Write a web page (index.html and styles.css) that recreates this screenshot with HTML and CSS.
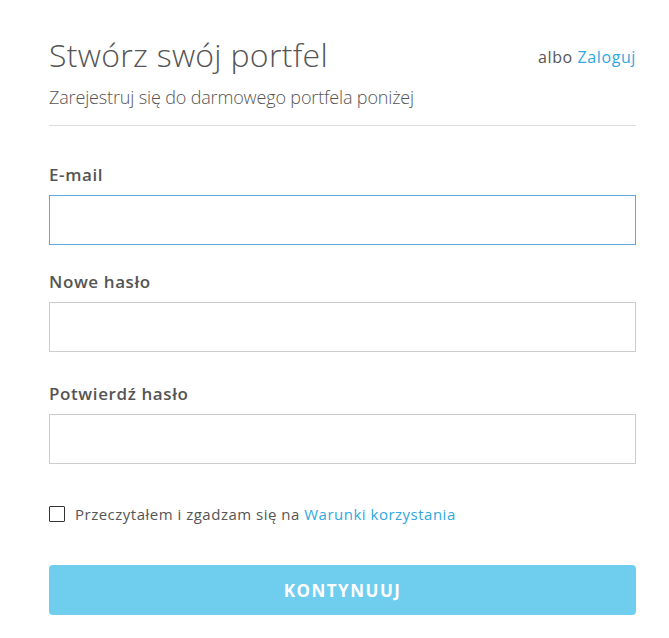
FILE: index.html
```html
<!DOCTYPE html>
<html lang="pl">
<head>
<meta charset="utf-8">
<title>Stwórz swój portfel</title>
<link rel="stylesheet" href="styles.css">
</head>
<body>
<main class="page">
  <header class="head">
    <div class="head-row">
      <h1 class="title">Stwórz swój portfel</h1>
      <p class="alt">albo <a href="#" class="link">Zaloguj</a></p>
    </div>
    <p class="subtitle">Zarejestruj się do darmowego portfela poniżej</p>
  </header>
  <form class="form">
    <div class="field">
      <label class="label" for="email">E-mail</label>
      <input class="input input-focus" id="email" type="email">
    </div>
    <div class="field field-wide">
      <label class="label" for="pw">Nowe hasło</label>
      <input class="input" id="pw" type="password">
    </div>
    <div class="field field-last">
      <label class="label" for="pw2">Potwierdź hasło</label>
      <input class="input" id="pw2" type="password">
    </div>
    <label class="terms">
      <span class="box"></span>
      <span>Przeczytałem i zgadzam się na <a href="#" class="link">Warunki korzystania</a></span>
    </label>
    <button type="button" class="btn">KONTYNUUJ</button>
  </form>
</main>
</body>
</html>
```
FILE: styles.css
```css
* { box-sizing: border-box; }
html, body { margin: 0; background: #fff; }
body { font-family: "Open Sans", "Liberation Sans", sans-serif; color: #555; }
.page { padding: 36px 33px 0 49px; }
.head { border-bottom: 1px solid #ddd; padding-bottom: 16px; }
.head-row { display: flex; justify-content: space-between; align-items: flex-start; }
.title { margin: 0; font-family: "Open Sans", sans-serif; font-weight: 300; font-size: 32px; line-height: 38px; letter-spacing: 0.3px; color: #555; }
.alt { margin: 9px 0 0; font-size: 16px; line-height: 24px; letter-spacing: 0.6px; color: #555; }
.link { color: #2fa8e0; text-decoration: none; }
.subtitle { margin: 11px 0 0; font-family: "Open Sans", sans-serif; font-weight: 300; font-size: 18px; line-height: 24px; letter-spacing: -0.15px; color: #555; }
.form { display: flex; flex-direction: column; padding-top: 38px; }
.field { display: flex; flex-direction: column; margin-bottom: 26px; }
.field-wide { margin-bottom: 31px; }
.field-last { margin-bottom: 40px; }
.label { font-weight: 600; font-size: 17px; line-height: 22px; letter-spacing: 0.6px; margin-bottom: 9px; color: #555; }
.input { height: 50px; border: 1px solid #ccc; border-radius: 0; background: #fff; font: inherit; padding: 0 12px; }
.input-focus { border-color: #5fa8e0; outline: none; }
.terms { display: flex; align-items: center; gap: 10px; font-size: 15px; line-height: 20px; letter-spacing: 0.5px; color: #555; }
.box { width: 16px; height: 16px; border: 1px solid #333; border-radius: 1px; flex: none; }
.btn { margin-top: 41px; height: 50px; border: 0; border-radius: 4px; background: #6fcdee; color: #fff; font-family: "Open Sans", sans-serif; font-weight: 700; font-size: 17px; letter-spacing: 1.5px; }
```
